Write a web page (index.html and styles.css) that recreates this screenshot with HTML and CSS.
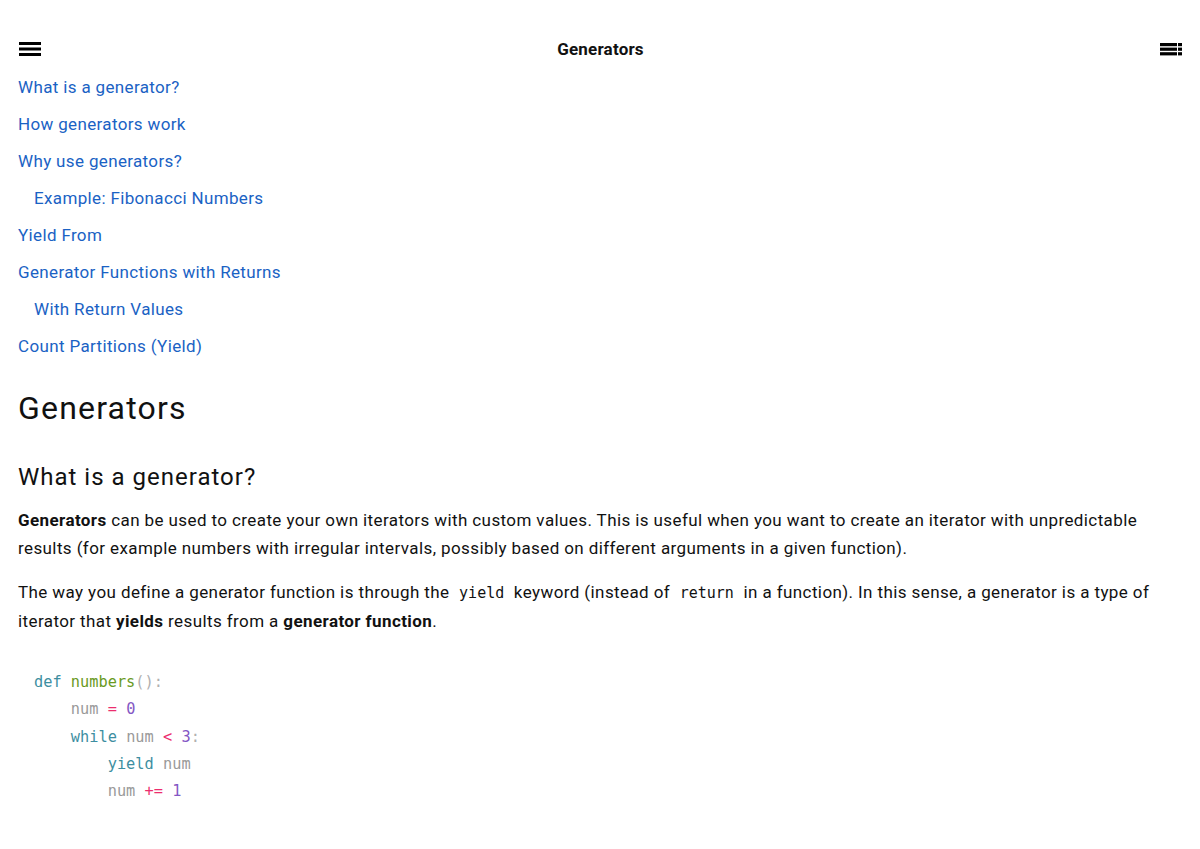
FILE: index.html
```html
<!DOCTYPE html>
<html>
<head>
<meta charset="utf-8">
<link rel="stylesheet" href="styles.css">
</head>
<body>
<header class="topbar">
  <svg class="icon" width="22" height="14" viewBox="0 0 22 14"><rect x="0" y="0" width="22" height="3" fill="#000"/><rect x="0" y="5.5" width="22" height="3" fill="#000"/><rect x="0" y="11" width="22" height="3" fill="#000"/></svg>
  <div class="title">Generators</div>
  <svg class="icon" width="22" height="13" viewBox="0 0 22 13"><rect x="0" y="0" width="17" height="3.2" fill="#000"/><rect x="18" y="0" width="4" height="3.2" fill="#000"/><rect x="0" y="4.6" width="17" height="3.2" fill="#000"/><rect x="18" y="4.6" width="4" height="3.2" fill="#000"/><rect x="0" y="9.2" width="17" height="3.2" fill="#000"/><rect x="18" y="9.2" width="4" height="3.2" fill="#000"/></svg>
</header>
<nav class="toc">
  <a href="#">What is a generator?</a>
  <a href="#">How generators work</a>
  <a href="#">Why use generators?</a>
  <a href="#" class="sub">Example: Fibonacci Numbers</a>
  <a href="#">Yield From</a>
  <a href="#">Generator Functions with Returns</a>
  <a href="#" class="sub">With Return Values</a>
  <a href="#">Count Partitions (Yield)</a>
</nav>
<main class="content">
  <h1>Generators</h1>
  <h2>What is a generator?</h2>
  <p><strong>Generators</strong> can be used to create your own iterators with custom values. This is useful when you want to create an iterator with unpredictable results (for example numbers with irregular intervals, possibly based on different arguments in a given function).</p>
  <p>The way you define a generator function is through the <code>yield</code> keyword (instead of <code>return</code> in a function). In this sense, a generator is a type of iterator that <strong>yields</strong> results from a <strong>generator function</strong>.</p>
  <pre class="code"><span class="kw">def</span> <span class="fn">numbers</span><span class="pu">():</span>
    <span class="nm">num</span> <span class="op">=</span> <span class="nb">0</span>
    <span class="kw">while</span> <span class="nm">num</span> <span class="op">&lt;</span> <span class="nb">3</span><span class="pu">:</span>
        <span class="kw">yield</span> <span class="nm">num</span>
        <span class="nm">num</span> <span class="op">+=</span> <span class="nb">1</span></pre>
</main>
</body>
</html>
```

FILE: styles.css
```css
html, body {
  margin: 0;
  padding: 0;
  background: #fff;
}
body {
  font-family: Roboto, "Liberation Sans", sans-serif;
  color: #111;
  padding: 0 18px;
}
.topbar {
  display: flex;
  align-items: center;
  justify-content: space-between;
  height: 40px;
  padding-top: 29px;
  padding-left: 1px;
}
.topbar .icon {
  display: block;
}
.title {
  font-weight: 700;
  font-size: 17px;
  letter-spacing: 0.2px;
  color: #111;
}
.toc {
  display: flex;
  flex-direction: column;
}
.toc a {
  color: #1a62c4;
  text-decoration: none;
  font-size: 17px;
  letter-spacing: 0.35px;
  line-height: 20px;
  padding: 8px 0 9px;
}
.toc a.sub {
  padding-left: 16px;
}
.content h1 {
  font-weight: 400;
  font-size: 32px;
  letter-spacing: 1.2px;
  margin: 21px 0 0;
  line-height: 44px;
}
.content h2 {
  font-weight: 400;
  font-size: 24px;
  letter-spacing: 1px;
  margin: 32px 0 0;
  line-height: 30px;
}
.content p {
  font-size: 17px;
  letter-spacing: 0.4px;
  line-height: 28px;
  margin: 16px 0 0;
}
.content h2 + p {
  margin-top: 14px;
}
.content strong {
  font-weight: 700;
}
code {
  font-family: "DejaVu Sans Mono", "Liberation Mono", monospace;
  font-size: 15px;
  letter-spacing: 0;
  padding: 0 5px;
}
.code {
  font-family: "DejaVu Sans Mono", "Liberation Mono", monospace;
  font-size: 15.3px;
  line-height: 27.3px;
  margin: 34px 0 0;
  padding: 0 16px;
  color: #999;
}
.kw { color: #3d8ea1; }
.fn { color: #6a9a1f; }
.pu { color: #b0b0b0; }
.nm { color: #9a9a9a; }
.op { color: #ec2d6e; }
.nb { color: #8457c4; }
```
